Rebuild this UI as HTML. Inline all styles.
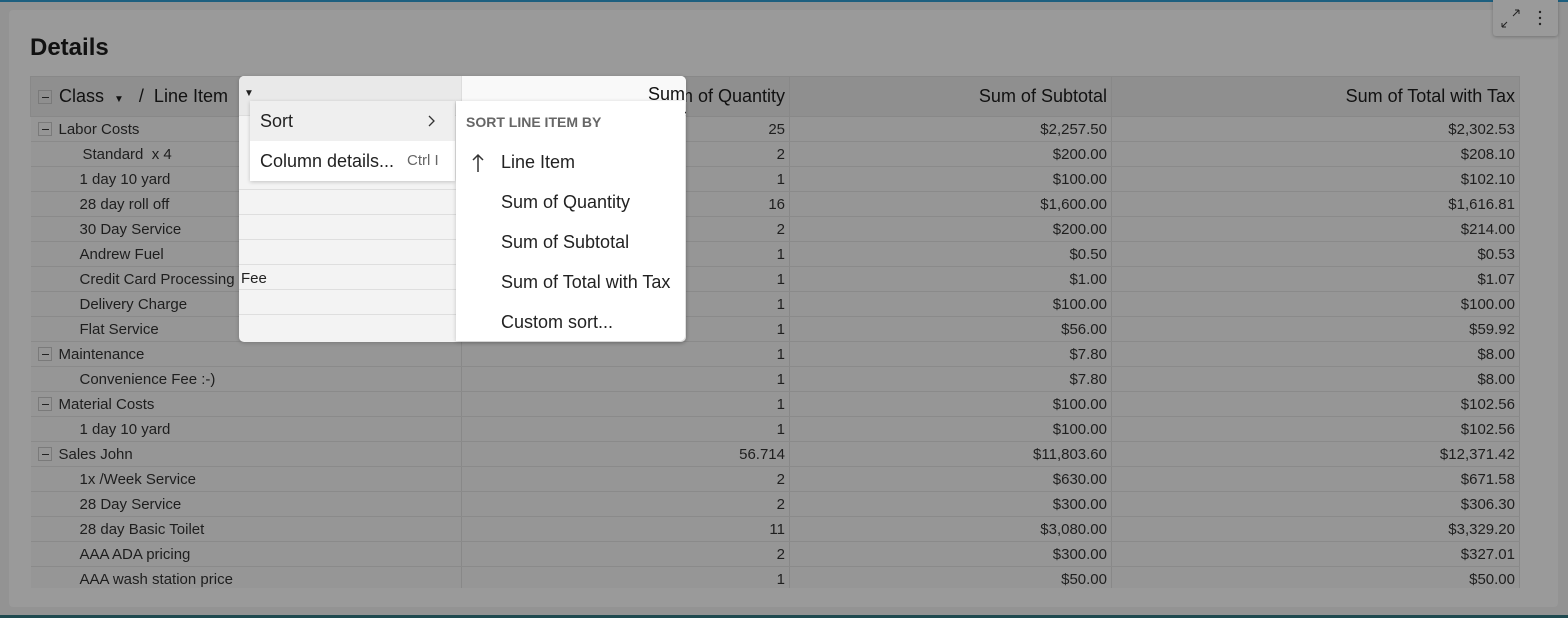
<!DOCTYPE html>
<html><head><meta charset="utf-8"><style>
*{box-sizing:border-box;margin:0;padding:0}
body{width:1568px;height:618px;background:#939393;font-family:"Liberation Sans",sans-serif;color:#1e1e1e;position:relative;overflow:hidden}
.top{position:absolute;left:0;top:0;width:1568px;height:2px;background:#1d5f7f}
.bot{position:absolute;left:0;top:615px;width:1568px;height:3px;background:#1f4a50}
.panel{position:absolute;left:9px;top:10px;width:1549px;height:597px;background:#9a9a9a;border-radius:4px}
h1{position:absolute;left:30px;top:34px;font-size:24px;font-weight:bold;color:#111}
.tools{position:absolute;left:1493px;top:0;width:65px;height:36px;background:#9a9a9a;box-shadow:0 1px 3px rgba(0,0,0,.25);border-radius:0 0 3px 3px}
table{position:absolute;left:30px;top:76px;border-collapse:collapse;width:1489px;table-layout:fixed;font-size:15px}
th{height:40px;background:#8f8f8f;font-weight:normal;font-size:18px;text-align:right;padding:0 4px;border:1px solid #888;color:#111}
td{height:25px;background:#969696;border-bottom:1px solid #8a8a8a;border-right:1px solid #888;text-align:right;padding:0 4px;white-space:nowrap;overflow:visible}
td.l{text-align:left}
.box{display:inline-block;width:14px;height:14px;border:1px solid #7a7a7a;vertical-align:-2px;position:relative;margin-right:7px}
.box:after{content:"";position:absolute;left:3px;top:6px;width:7px;height:1px;background:#222}
.pop{position:absolute;left:239px;top:76px;width:447px;height:266px;background:#f3f3f3;border-radius:5px;overflow:hidden;box-shadow:0 1px 4px rgba(0,0,0,.2)}
.pop .right{position:absolute;left:222px;top:0;width:225px;height:40px;background:#f9f9f9;border-left:1px solid #ddd;border-bottom:1px solid #e4e4e4}
.pop .ln{position:absolute;left:0;width:222px;height:1px;background:#dedede}
.m1{position:absolute;left:250px;top:101px;width:205px;height:80px;background:#fff;box-shadow:0 1px 4px rgba(0,0,0,.2);font-size:18px;color:#222}
.m1 div{height:40px;line-height:40px;padding-left:10px;position:relative}
.m2{position:absolute;left:456px;top:101px;width:229px;height:240px;background:#fff;box-shadow:0 1px 4px rgba(0,0,0,.2);font-size:18px;color:#222;border-radius:0 0 5px 0}
.m2 .hd{font-size:14px;font-weight:bold;color:#666;padding:13px 0 0 10px;height:41px}
.m2 .it{height:40px;line-height:40px;padding-left:45px;position:relative}
</style></head><body>
<div class="top"></div>
<div class="panel"></div>
<h1>Details</h1>
<div class="tools"><svg width="65" height="36" viewBox="0 0 65 36"><g stroke="#222" stroke-width="1" fill="none"><path d="M9 27 L14 22 M9 27 h4 M9 27 v-4 M20 16 L26 10 M26 10 h-4 M26 10 v4"/></g><g fill="#222"><circle cx="47" cy="12" r="1.2"/><circle cx="47" cy="18" r="1.2"/><circle cx="47" cy="24" r="1.2"/></g></svg></div>
<table>
<colgroup><col style="width:431px"><col style="width:328px"><col style="width:322px"><col style="width:408px"></colgroup>
<tr><th style="text-align:left;padding-left:7px"><span class="box"></span>Class&nbsp; <span style="font-size:10px">▼</span> &nbsp;&nbsp;/&nbsp; Line Item</th><th>Sum of Quantity</th><th>Sum of Subtotal</th><th>Sum of Total with Tax</th></tr>
<tr><td class="l" style="padding-left:7px"><span class="box"></span>Labor Costs</td><td>25</td><td>$2,257.50</td><td>$2,302.53</td></tr>
<tr><td class="l" style="padding-left:52px">Standard&nbsp; x 4</td><td>2</td><td>$200.00</td><td>$208.10</td></tr>
<tr><td class="l" style="padding-left:49px">1 day 10 yard</td><td>1</td><td>$100.00</td><td>$102.10</td></tr>
<tr><td class="l" style="padding-left:49px">28 day roll off</td><td>16</td><td>$1,600.00</td><td>$1,616.81</td></tr>
<tr><td class="l" style="padding-left:49px">30 Day Service</td><td>2</td><td>$200.00</td><td>$214.00</td></tr>
<tr><td class="l" style="padding-left:49px">Andrew Fuel</td><td>1</td><td>$0.50</td><td>$0.53</td></tr>
<tr><td class="l" style="padding-left:49px">Credit Card Processing Fee</td><td>1</td><td>$1.00</td><td>$1.07</td></tr>
<tr><td class="l" style="padding-left:49px">Delivery Charge</td><td>1</td><td>$100.00</td><td>$100.00</td></tr>
<tr><td class="l" style="padding-left:49px">Flat Service</td><td>1</td><td>$56.00</td><td>$59.92</td></tr>
<tr><td class="l" style="padding-left:7px"><span class="box"></span>Maintenance</td><td>1</td><td>$7.80</td><td>$8.00</td></tr>
<tr><td class="l" style="padding-left:49px">Convenience Fee :-)</td><td>1</td><td>$7.80</td><td>$8.00</td></tr>
<tr><td class="l" style="padding-left:7px"><span class="box"></span>Material Costs</td><td>1</td><td>$100.00</td><td>$102.56</td></tr>
<tr><td class="l" style="padding-left:49px">1 day 10 yard</td><td>1</td><td>$100.00</td><td>$102.56</td></tr>
<tr><td class="l" style="padding-left:7px"><span class="box"></span>Sales John</td><td>56.714</td><td>$11,803.60</td><td>$12,371.42</td></tr>
<tr><td class="l" style="padding-left:49px">1x /Week Service</td><td>2</td><td>$630.00</td><td>$671.58</td></tr>
<tr><td class="l" style="padding-left:49px">28 Day Service</td><td>2</td><td>$300.00</td><td>$306.30</td></tr>
<tr><td class="l" style="padding-left:49px">28 day Basic Toilet</td><td>11</td><td>$3,080.00</td><td>$3,329.20</td></tr>
<tr><td class="l" style="padding-left:49px">AAA ADA pricing</td><td>2</td><td>$300.00</td><td>$327.01</td></tr>
<tr><td class="l" style="padding-left:49px">AAA wash station price</td><td>1</td><td>$50.00</td><td>$50.00</td></tr>
</table>
<div style="position:absolute;left:30px;top:588px;width:1500px;height:19px;background:#9a9a9a"></div>
<div class="pop">
<div style="position:absolute;left:0;top:0;width:222px;height:40px;background:#e9e9e9;border-bottom:1px solid #ddd"></div>
<div style="position:absolute;left:5px;top:12px;font-size:10px;color:#222">▼</div>
<div class="right"><span style="position:absolute;left:186px;top:8px;font-size:18px;color:#111">Sum of Quantity</span></div>
<div class="ln" style="top:113px"></div><div class="ln" style="top:138px"></div><div class="ln" style="top:163px"></div><div class="ln" style="top:188px"></div><div class="ln" style="top:213px"></div><div class="ln" style="top:238px"></div>
<div style="position:absolute;left:2px;top:194px;font-size:15px;color:#222">Fee</div>
</div>
<div class="m1"><div style="background:#efefef">Sort<svg style="position:absolute;left:178px;top:14px" width="8" height="12" viewBox="0 0 8 12"><path d="M1 1 L6 6 L1 11" stroke="#333" stroke-width="1.3" fill="none"/></svg></div><div>Column details...<span style="position:absolute;left:157px;font-size:15px;color:#666">Ctrl I</span></div></div>
<div class="m2"><div class="hd">SORT LINE ITEM BY</div>
<div class="it"><svg style="position:absolute;left:16px;top:11px" width="12" height="20" viewBox="0 0 12 20"><path d="M6 19 V2 M1 7 L6 2 L11 7" stroke="#333" stroke-width="1.5" fill="none"/></svg>Line Item</div>
<div class="it">Sum of Quantity</div><div class="it">Sum of Subtotal</div><div class="it">Sum of Total with Tax</div><div class="it">Custom sort...</div></div>
<div class="bot"></div>
</body></html>
